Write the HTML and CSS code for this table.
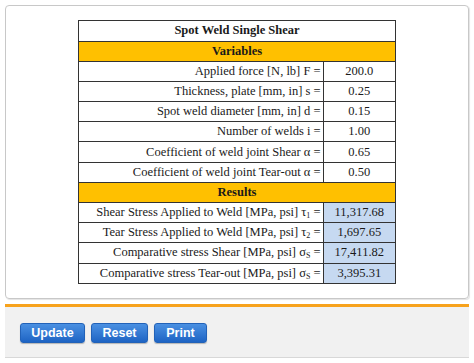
FILE: index.html
```html
<!DOCTYPE html>
<html>
<head>
<meta charset="utf-8">
<link rel="stylesheet" href="styles.css">
</head>
<body>
<div class="panel">
  <table class="calc">
    <tr><th colspan="2" class="title">Spot Weld Single Shear</th></tr>
    <tr><th colspan="2" class="section">Variables</th></tr>
    <tr><td class="label">Applied force [N, lb] F =</td><td class="val">200.0</td></tr>
    <tr><td class="label">Thickness, plate [mm, in] s =</td><td class="val">0.25</td></tr>
    <tr><td class="label">Spot weld diameter [mm, in] d =</td><td class="val">0.15</td></tr>
    <tr><td class="label">Number of welds i =</td><td class="val">1.00</td></tr>
    <tr><td class="label">Coefficient of weld joint Shear α =</td><td class="val">0.65</td></tr>
    <tr><td class="label">Coefficient of weld joint Tear-out α =</td><td class="val">0.50</td></tr>
    <tr><th colspan="2" class="section">Results</th></tr>
    <tr><td class="label">Shear Stress Applied to Weld [MPa, psi] τ<sub>1</sub> =</td><td class="val res">11,317.68</td></tr>
    <tr><td class="label">Tear Stress Applied to Weld [MPa, psi] τ<sub>2</sub> =</td><td class="val res">1,697.65</td></tr>
    <tr><td class="label">Comparative stress Shear [MPa, psi] σ<sub>S</sub> =</td><td class="val res">17,411.82</td></tr>
    <tr><td class="label">Comparative stress Tear-out [MPa, psi] σ<sub>S</sub> =</td><td class="val res">3,395.31</td></tr>
  </table>
</div>
<div class="toolbar">
  <button class="btn">Update</button>
  <button class="btn">Reset</button>
  <button class="btn">Print</button>
</div>
</body>
</html>
```
FILE: styles.css
```css
html, body { margin: 0; padding: 0; background: #fff; }
body { width: 474px; height: 363px; overflow: hidden; }
.panel {
  margin: 5px 5px 0 5px;
  width: 462px;
  border: 1px solid #c8c8c8;
  border-radius: 4px;
  box-shadow: 1px 1px 1px #e4e4e4;
  padding-top: 14px;
  box-sizing: content-box;
  height: 278px;
}
.calc {
  border-collapse: collapse;
  margin: 0 auto;
  width: 318px;
  font-family: "Liberation Serif", serif;
  font-size: 12.5px;
  color: #1a1a1a;
  border: 1px solid #222;
}
.calc th, .calc td {
  border: 1px solid #333;
  height: 19.2px;
  padding: 0 2px;
  white-space: nowrap;
}
.calc th { font-weight: bold; text-align: center; font-size: 12.5px; }
.calc .title { background: #fff; height: 19.5px; }
.calc .section { background: #ffc000; }
.calc .label { text-align: right; width: 240px; }
.calc .val { text-align: center; width: 68px; }
.calc .res { background: #c6d9f1; }
.calc sub { font-size: 8px; vertical-align: -2px; line-height: 0; }
.toolbar {
  margin: 5px 5px 0 5px;
  border-top: 3px solid #f7a21c;
  border-bottom: 1px solid #d8d8d8;
  background: #f1f1f1;
  display: flex;
  align-items: flex-start;
  gap: 6px;
  padding: 16px 0 0 15px;
  box-sizing: border-box;
  height: 54px;
}
.btn {
  height: 20px;
  padding: 0 10px;
  border: 1px solid #2262b8;
  border-radius: 3px;
  background: linear-gradient(#4a90e2, #1e64c4);
  color: #fff;
  font-family: "Liberation Sans", Arial, sans-serif;
  font-weight: bold;
  font-size: 12.5px;
  line-height: 18px;
  box-shadow: 0 1px 1px rgba(0,0,0,0.25);
}
.btn:nth-child(1) { width: 65px; }
.btn:nth-child(2) { width: 57px; }
.btn:nth-child(3) { width: 53px; }
```
